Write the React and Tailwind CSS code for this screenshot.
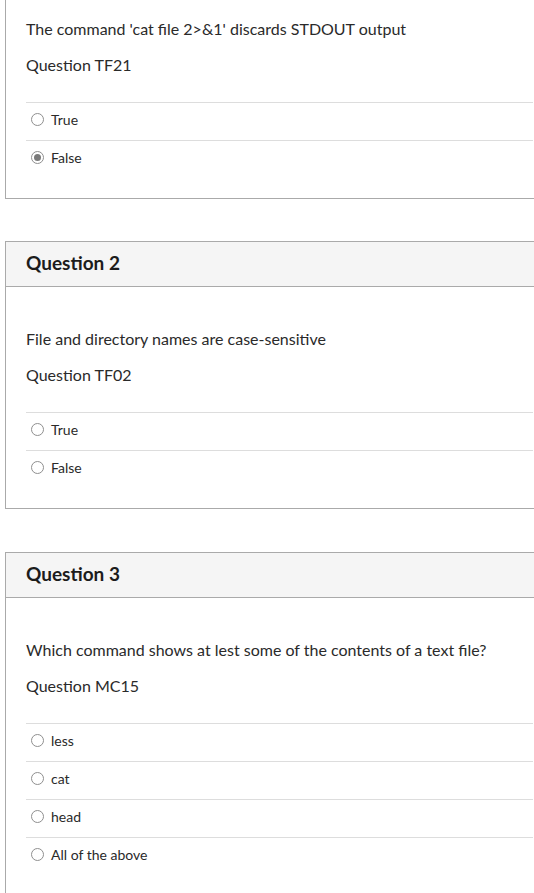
import React from 'react';

const questions = [
  {
    id: 1,
    title: null,
    text: "The command 'cat file 2>&1' discards STDOUT output",
    code: 'Question TF21',
    options: ['True', 'False'],
    selected: 1,
  },
  {
    id: 2,
    title: 'Question 2',
    text: 'File and directory names are case-sensitive',
    code: 'Question TF02',
    options: ['True', 'False'],
    selected: -1,
  },
  {
    id: 3,
    title: 'Question 3',
    text: 'Which command shows at lest some of the contents of a text file?',
    code: 'Question MC15',
    options: ['less', 'cat', 'head', 'All of the above'],
    selected: -1,
  },
];

const Radio = ({ checked }) => (
  <span className="flex items-center justify-center w-[13px] h-[13px] rounded-full border border-[#8f8f8f] bg-white shrink-0">
    {checked && <span className="w-[7px] h-[7px] rounded-full bg-[#7a7a7a]" />}
  </span>
);

const QuestionCard = ({ q, index }) => {
  const gap = index === 0 ? 'border-t-0' : index === 1 ? 'mt-[42px]' : 'mt-[43px]';
  return (
    <div className={'ml-[5px] -mr-5 border border-[#aaaaaa] bg-white ' + gap}>
      {q.title && (
        <div className="h-[45px] bg-[#f5f5f5] border-b border-[#aaaaaa] px-5 pb-[4px] flex items-center">
          <h2 className="text-[19px] font-bold text-[#1c1c1c] leading-none">{q.title}</h2>
        </div>
      )}
      <div className={'px-5 pb-5 ' + (index === 0 ? 'pt-[17px]' : 'pt-[40px]')}>
        <p className="text-[16px] leading-[24px] text-[#2a2a2a]">{q.text}</p>
        <p className="mt-3 text-[16px] leading-[24px] text-[#2a2a2a]">{q.code}</p>
        <div className="mt-[25px]">
          {q.options.map((opt, i) => (
            <div
              key={opt}
              className="h-[38px] border-t border-[#dddddd] flex items-center gap-[7px] pl-[5px] pb-[5px]"
            >
              <Radio checked={i === q.selected} />
              <span className="text-[14px] text-[#2a2a2a]">{opt}</span>
            </div>
          ))}
        </div>
      </div>
    </div>
  );
};

export default function App() {
  return (
    <div
      className="w-[534px] h-[893px] overflow-hidden bg-white"
      style={{ fontFamily: 'Lato, "Open Sans", sans-serif' }}
    >
      {questions.map((q, i) => (
        <QuestionCard key={q.id} q={q} index={i} />
      ))}
    </div>
  );
}
